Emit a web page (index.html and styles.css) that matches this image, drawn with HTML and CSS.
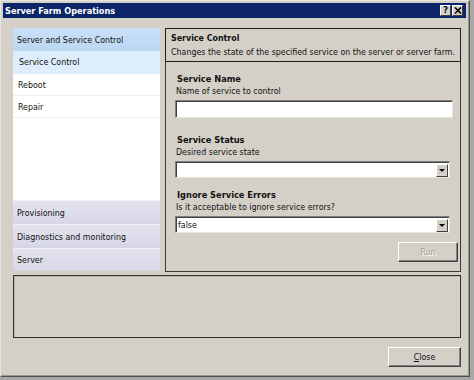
FILE: index.html
```html
<!DOCTYPE html>
<html>
<head>
<meta charset="utf-8">
<link rel="stylesheet" href="styles.css">
</head>
<body>
<div class="window">
  <div class="titlebar">
    <span class="title">Server Farm Operations</span>
    <div class="caption-btns">
      <span class="cbtn help">?</span>
      <span class="cbtn close"><svg width="8" height="7" viewBox="0 0 8 7"><path d="M1 0.5 L7 6.5 M7 0.5 L1 6.5" stroke="#000" stroke-width="1.6"/></svg></span>
    </div>
  </div>
  <div class="content">
    <div class="main">
      <div class="nav">
        <div class="nav-head">Server and Service Control</div>
        <div class="nav-item selected">Service Control</div>
        <div class="nav-item">Reboot</div>
        <div class="nav-item">Repair</div>
        <div class="nav-fill"></div>
        <div class="nav-group">Provisioning</div>
        <div class="nav-group">Diagnostics and monitoring</div>
        <div class="nav-group">Server</div>
      </div>
      <div class="panel">
        <div class="panel-head">
          <div class="panel-title">Service Control</div>
          <div class="panel-desc">Changes the state of the specified service on the server or server farm.</div>
        </div>
        <div class="panel-body">
          <div class="field f1">
            <div class="label">Service Name</div>
            <div class="desc">Name of service to control</div>
            <div class="textbox"></div>
          </div>
          <div class="field f2">
            <div class="label">Service Status</div>
            <div class="desc">Desired service state</div>
            <div class="select"><span class="sel-value"></span><span class="sel-arrow"></span></div>
          </div>
          <div class="field f3">
            <div class="label">Ignore Service Errors</div>
            <div class="desc">Is it acceptable to ignore service errors?</div>
            <div class="select"><span class="sel-value">false</span><span class="sel-arrow"></span></div>
          </div>
          <div class="actions">
            <div class="btn run">Run</div>
          </div>
        </div>
      </div>
    </div>
    <div class="output"></div>
    <div class="footer">
      <div class="btn closebtn"><span class="u">C</span>lose</div>
    </div>
  </div>
</div>
</body>
</html>
```

FILE: styles.css
```css
* { box-sizing: border-box; }
html, body { margin: 0; padding: 0; }
body {
  background: #a8a8a8;
  width: 474px;
  height: 380px;
  overflow: hidden;
  font-family: "DejaVu Sans Condensed", "DejaVu Sans", sans-serif;
  font-stretch: condensed;
  font-size: 8.8px;
  color: #111;
}
.window {
  width: 470px;
  height: 377px;
  background: #d4d0c8;
  border-top: 1px solid #e8e6e0;
  border-left: 1px solid #e8e6e0;
  border-right: 1px solid #505050;
  border-bottom: 1px solid #505050;
  box-shadow: inset -1px -1px 0 #9a978f;
  padding: 2px 2px 0 2px;
}
.titlebar {
  height: 15px;
  background: #0c2468;
  display: flex;
  align-items: center;
  justify-content: space-between;
  padding-left: 2px;
  margin-right: 1px;
}
.title {
  color: #fff;
  font-weight: bold;
  font-size: 9.1px;
}
.caption-btns {
  display: flex;
  gap: 1px;
  margin-right: 3px;
}
.cbtn {
  width: 11px;
  height: 11px;
  background: #d4d0c8;
  border-top: 1px solid #fff;
  border-left: 1px solid #fff;
  border-right: 1px solid #404040;
  border-bottom: 1px solid #404040;
  display: flex;
  align-items: center;
  justify-content: center;
  font-family: "DejaVu Sans", sans-serif;
  font-weight: bold;
  font-size: 9px;
  line-height: 1;
  color: #000;
}
.content {
  padding: 10px 6px 0 10px;
}
.main {
  display: flex;
  gap: 5px;
  height: 244px;
}
.nav {
  width: 147px;
  height: 243px;
  background: #fff;
  display: flex;
  flex-direction: column;
}
.nav-head {
  height: 23px;
  display: flex;
  align-items: center;
  padding-left: 4px;
  background: linear-gradient(#c9e0f7, #bcd7f3);
}
.nav-item {
  height: 22px;
  display: flex;
  align-items: center;
  padding-left: 5px;
  border-bottom: 1px solid #e7eef6;
}
.nav-item.selected {
  height: 23px;
  background: #ddedfb;
  padding-left: 6px;
  border-bottom-color: #e2eef9;
}
.nav-fill {
  flex: 1;
  background: #fff;
}
.nav-group {
  height: 24px;
  display: flex;
  align-items: center;
  padding-left: 4px;
  background: linear-gradient(#e4e4ee, #d6d6e6);
  border-top: 1px solid #efeff6;
}
.nav-group:last-child { height: 23px; }
.panel {
  width: 296px;
  display: flex;
  flex-direction: column;
}
.panel-head {
  height: 34px;
  border: 1px solid #1e1e1e;
  padding: 3px 0 0 5px;
}
.panel-title {
  font-weight: bold;
  line-height: 13px;
}
.panel-desc {
  line-height: 14px;
}
.panel-body {
  flex: 1;
  border: 1px solid #3a3a3a;
  border-top: none;
  padding: 10px 0 0 9px;
  display: flex;
  flex-direction: column;
}
.field { width: 278px; }
.f2 { margin-top: 15px; }
.f3 { margin-top: 10px; }
.label {
  font-weight: bold;
  line-height: 13px;
  padding-left: 2px;
  font-size: 9.2px;
}
.desc {
  line-height: 13px;
  padding-left: 1px;
  margin-bottom: 2px;
}
.textbox, .select {
  height: 18px;
  background: #fff;
  border-top: 1px solid #808080;
  border-left: 1px solid #808080;
  border-right: 1px solid #e6e4de;
  border-bottom: 1px solid #e6e4de;
  box-shadow: inset 1px 1px 0 #404040;
}
.select {
  height: 17px;
  width: 275px;
  display: flex;
  align-items: center;
  justify-content: space-between;
  padding: 1px 1px 0 2px;
}
.sel-value { line-height: 14px; }
.sel-arrow {
  width: 12px;
  height: 13px;
  background: #d4d0c8;
  border-top: 1px solid #fff;
  border-left: 1px solid #fff;
  border-right: 1px solid #404040;
  border-bottom: 1px solid #404040;
  display: flex;
  align-items: center;
  justify-content: center;
}
.sel-arrow::after {
  content: "";
  border-left: 3px solid transparent;
  border-right: 3px solid transparent;
  border-top: 3px solid #000;
}
.actions {
  display: flex;
  justify-content: flex-end;
  padding-right: 2px;
  margin-top: 9px;
}
.btn {
  height: 20px;
  background: #d4d0c8;
  border-top: 1px solid #fff;
  border-left: 1px solid #fff;
  border-right: 1px solid #404040;
  border-bottom: 1px solid #404040;
  box-shadow: inset -1px -1px 0 #808080;
  display: flex;
  align-items: center;
  justify-content: center;
}
.run {
  width: 60px;
  color: #a09c94;
  text-shadow: 1px 1px 0 #fff;
}
.output {
  margin-top: 3px;
  width: 448px;
  height: 63px;
  border: 1px solid #303030;
  box-shadow: inset 1px 1px 0 #bab6ae;
}
.footer {
  display: flex;
  justify-content: flex-end;
  margin-top: 9px;
  padding-right: 0;
  width: 448px;
}
.closebtn { width: 73px; }
.u { text-decoration: underline; }
```
